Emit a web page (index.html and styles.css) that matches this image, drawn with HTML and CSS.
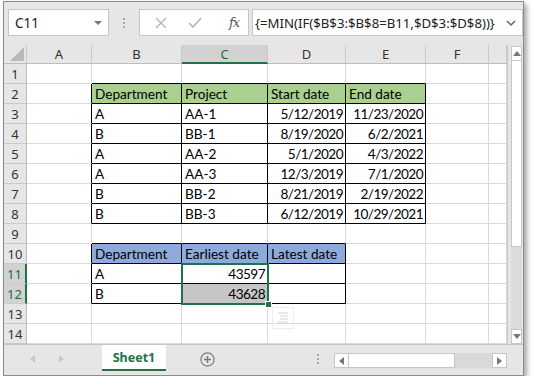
FILE: index.html
```html
<!DOCTYPE html>
<html>
<head>
<meta charset="utf-8">
<link rel="stylesheet" href="styles.css">
</head>
<body>
<div class="window">
  <div class="fbar">
    <div class="namebox"><span class="nb-text">C11</span><span class="nb-arrow"></span></div>
    <div class="dots"><i></i><i></i><i></i></div>
    <div class="btnbox">
      <svg class="ico" width="14" height="14" viewBox="0 0 14 14"><path d="M2 2 L12 12 M12 2 L2 12" stroke="#b4b4b4" stroke-width="1.4" fill="none"/></svg>
      <svg class="ico" width="16" height="14" viewBox="0 0 16 14"><path d="M2 7 L6 11 L14 2" stroke="#b4b4b4" stroke-width="1.6" fill="none"/></svg>
      <span class="fx">fx</span>
    </div>
    <div class="formula"><span class="ftext">{=MIN(IF($B$3:$B$8=B11,$D$3:$D$8))}</span>
      <svg class="chev" width="10" height="8" viewBox="0 0 10 8"><path d="M1 2 L5 6 L9 2" stroke="#666" stroke-width="1.5" fill="none"/></svg>
    </div>
  </div>
  <div class="main">
    <div class="sheet">
      <div class="ch corner"><svg width="14" height="14" viewBox="0 0 14 14"><path d="M14 0 L14 14 L0 14 Z" fill="#b9b9b9"/></svg></div>
      <div class="ch">A</div><div class="ch">B</div><div class="ch sel">C</div><div class="ch">D</div><div class="ch">E</div><div class="ch">F</div><div class="ch"></div>

      <div class="rh">1</div><div class="c"></div><div class="c bb"></div><div class="c bb"></div><div class="c bb"></div><div class="c bb"></div><div class="c"></div><div class="c"></div>

      <div class="rh">2</div><div class="c br"></div><div class="c t g">Department</div><div class="c t g">Project</div><div class="c t g">Start date</div><div class="c t g">End date</div><div class="c"></div><div class="c"></div>

      <div class="rh">3</div><div class="c br"></div><div class="c t">A</div><div class="c t">AA-1</div><div class="c t r">5/12/2019</div><div class="c t r">11/23/2020</div><div class="c"></div><div class="c"></div>
      <div class="rh">4</div><div class="c br"></div><div class="c t">B</div><div class="c t">BB-1</div><div class="c t r">8/19/2020</div><div class="c t r">6/2/2021</div><div class="c"></div><div class="c"></div>
      <div class="rh">5</div><div class="c br"></div><div class="c t">A</div><div class="c t">AA-2</div><div class="c t r">5/1/2020</div><div class="c t r">4/3/2022</div><div class="c"></div><div class="c"></div>
      <div class="rh">6</div><div class="c br"></div><div class="c t">A</div><div class="c t">AA-3</div><div class="c t r">12/3/2019</div><div class="c t r">7/1/2020</div><div class="c"></div><div class="c"></div>
      <div class="rh">7</div><div class="c br"></div><div class="c t">B</div><div class="c t">BB-2</div><div class="c t r">8/21/2019</div><div class="c t r">2/19/2022</div><div class="c"></div><div class="c"></div>
      <div class="rh">8</div><div class="c br"></div><div class="c t">B</div><div class="c t">BB-3</div><div class="c t r">6/12/2019</div><div class="c t r">10/29/2021</div><div class="c"></div><div class="c"></div>

      <div class="rh">9</div><div class="c"></div><div class="c bb"></div><div class="c bb"></div><div class="c bb"></div><div class="c"></div><div class="c"></div><div class="c"></div>

      <div class="rh">10</div><div class="c br"></div><div class="c t bl">Department</div><div class="c t bl">Earliest date</div><div class="c t bl">Latest date</div><div class="c"></div><div class="c"></div><div class="c"></div>
      <div class="rh rsel">11</div><div class="c br"></div><div class="c t">A</div><div class="c t r">43597</div><div class="c t"></div><div class="c"></div><div class="c"></div><div class="c"></div>
      <div class="rh rsel">12</div><div class="c br"></div><div class="c t">B</div><div class="c t r hl">43628</div><div class="c t"></div><div class="c"></div><div class="c"></div><div class="c"></div>

      <div class="rh">13</div><div class="c"></div><div class="c"></div><div class="c"></div><div class="c"></div><div class="c"></div><div class="c"></div><div class="c"></div>
      <div class="rh">14</div><div class="c"></div><div class="c"></div><div class="c"></div><div class="c"></div><div class="c"></div><div class="c"></div><div class="c"></div>

      <div class="selbox"><span class="handle"></span></div>
      <div class="qa">
        <svg width="22" height="22" viewBox="0 0 22 22"><rect x="0.5" y="0.5" width="21" height="21" fill="none" stroke="#eeeeee"/><path d="M6 6 H16 M8 9 H16 M8 12 H16 M6 15 H16" stroke="#e2e2e2" stroke-width="1.5"/></svg>
      </div>
    </div>
    <div class="vscroll">
      <div class="vbtn up"><svg width="8" height="5" viewBox="0 0 8 5"><path d="M0 5 L4 0 L8 5 Z" fill="#777"/></svg></div>
      <div class="vthumb"></div>
      <div class="vtrack"></div>
      <div class="vbtn down"><svg width="8" height="5" viewBox="0 0 8 5"><path d="M0 0 L4 5 L8 0 Z" fill="#777"/></svg></div>
    </div>
  </div>
  <div class="tabbar">
    <div class="navs">
      <svg width="5" height="8" viewBox="0 0 5 8"><path d="M5 0 L0 4 L5 8 Z" fill="#c8c8c8"/></svg>
      <svg width="5" height="8" viewBox="0 0 5 8"><path d="M0 0 L5 4 L0 8 Z" fill="#c8c8c8"/></svg>
    </div>
    <div class="tab">Sheet1</div>
    <div class="add"><svg width="15" height="15" viewBox="0 0 15 15"><circle cx="7.5" cy="7.5" r="6.6" fill="none" stroke="#7a7a7a" stroke-width="1.2"/><path d="M7.5 4 V11 M4 7.5 H11" stroke="#7a7a7a" stroke-width="1.5"/></svg></div>
    <div class="hdots"><i></i><i></i><i></i></div>
    <div class="hscroll">
      <div class="hbtn"><svg width="5" height="8" viewBox="0 0 5 8"><path d="M5 0 L0 4 L5 8 Z" fill="#777"/></svg></div>
      <div class="hthumb"></div>
      <div class="htrack"></div>
      <div class="hbtn"><svg width="5" height="8" viewBox="0 0 5 8"><path d="M0 0 L5 4 L0 8 Z" fill="#777"/></svg></div>
    </div>
  </div>
</div>
</body>
</html>
```

FILE: styles.css
```css
html, body { margin: 0; padding: 0; background: #ffffff; }
body { font-family: "Lato", "Liberation Sans", sans-serif; }

.window {
  margin: 1px 0 0 3px;
  width: 521px;
  height: 375px;
  box-sizing: border-box;
  border: 1px solid #8c8c8c;
  background: #e6e6e6;
  box-shadow: 3px 3px 5px rgba(0,0,0,0.35);
  display: flex;
  flex-direction: column;
  overflow: hidden;
}

/* formula bar */
.fbar {
  height: 43px;
  box-sizing: border-box;
  padding: 7px 0 0 4px;
  display: flex;
  align-items: flex-start;
  background: #e6e6e6;
}
.namebox {
  width: 101px; height: 27px; box-sizing: border-box;
  background: #fff; border: 1px solid #c6c6c6;
  display: flex; align-items: center; justify-content: space-between;
  padding: 0 6px 0 6px;
  font-family: "Noto Sans", "Open Sans", sans-serif; font-size: 13.5px; color: #222;
}
.nb-arrow { width: 0; height: 0; border-left: 4px solid transparent; border-right: 4px solid transparent; border-top: 4px solid #777; }
.dots { width: 30px; height: 27px; display: flex; flex-direction: column; align-items: center; justify-content: center; gap: 2px; }
.dots i, .hdots i { display: block; width: 2px; height: 2px; background: #a8a8a8; }
.btnbox {
  width: 110px; height: 27px; box-sizing: border-box;
  background: #fff; border: 1px solid #c6c6c6;
  display: flex; align-items: center;
  padding: 0 0 0 14px;
}
.btnbox .ico:nth-child(1) { margin-right: 19px; }
.btnbox .ico:nth-child(2) { margin-right: 26px; }
.fx { font-family: "DejaVu Serif", "Liberation Serif", serif; font-style: italic; font-size: 13px; color: #555; letter-spacing: -1px; }
.formula {
  margin-left: 3px;
  width: 271px; height: 27px; box-sizing: border-box;
  background: #fff; border: 1px solid #c6c6c6;
  display: flex; align-items: center; justify-content: space-between;
  padding: 0 6px 0 2px;
}
.ftext { font-family: "Noto Sans", "Open Sans", sans-serif; font-size: 13.2px; color: #222; white-space: nowrap; }

/* main grid */
.main { display: flex; height: 299px; }
.sheet {
  position: relative;
  display: grid;
  grid-template-columns: 23px 65px 90px 86px 78px 80px 63px 18px;
  grid-template-rows: 19px repeat(14, 20px);
  background: #fff;
  width: 503px;
}
.ch {
  background: #e6e6e6;
  border-right: 1px solid #c9c9c9;
  border-bottom: 1px solid #bdbdbd;
  box-sizing: border-box;
  display: flex; align-items: center; justify-content: center;
  font-family: "Noto Sans", "Open Sans", sans-serif; font-size: 13px; color: #333;
}
.ch.corner { justify-content: flex-end; align-items: flex-end; padding: 0 2px 2px 0; }
.ch.sel { background: #d2d2d2; border-bottom: 2px solid #217346; color: #1d6b3f; }
.rh {
  background: #e6e6e6;
  border-right: 1px solid #bdbdbd;
  border-bottom: 1px solid #c9c9c9;
  box-sizing: border-box;
  display: flex; align-items: center; justify-content: center;
  font-family: "Noto Sans", "Open Sans", sans-serif; font-size: 13px; color: #333;
}
.rh.rsel { background: #d2d2d2; border-right: 2px solid #217346; color: #1d6b3f; }
.c {
  border-right: 1px solid #d9d9d9;
  border-bottom: 1px solid #d9d9d9;
  box-sizing: border-box;
  font-size: 13.6px; color: #000;
  padding: 1px 2px 0 3px;
  display: flex; align-items: center;
  white-space: nowrap; overflow: hidden;
}
.c.t { border-right-color: #000; border-bottom-color: #000; }
.c.br { border-right-color: #000; }
.c.bb { border-bottom-color: #000; }
.c.r { justify-content: flex-end; letter-spacing: -0.55px; padding-right: 2px; }
.c.g { background: #a9d08e; }
.c.bl { background: #8eaadb; }
.c.hl { background: #c6c6c6; }

.selbox {
  position: absolute;
  left: 177px; top: 218px;
  width: 88px; height: 42px;
  box-sizing: border-box;
  border: 2px solid #217346;
  pointer-events: none;
}
.handle {
  position: absolute; right: -5px; bottom: -5px;
  width: 5px; height: 5px; background: #217346; border: 1px solid #fff;
}
.qa { position: absolute; left: 268px; top: 262px; }

/* vertical scrollbar */
.vscroll {
  width: 16px;
  background: #e6e6e6;
  border-left: 1px solid #c6c6c6;
  box-sizing: border-box;
  display: flex; flex-direction: column;
  padding: 1px 1px 0 3px;
}
.vbtn { height: 15px; background: #fff; border: 1px solid #c6c6c6; box-sizing: border-box; display: flex; align-items: center; justify-content: center; }
.vthumb { height: 186px; background: #fff; border: 1px solid #c6c6c6; border-top: 0; box-sizing: border-box; }
.vtrack { flex: 1; background: #dcdcdc; }

/* tab bar */
.tabbar {
  height: 31px; box-sizing: border-box;
  border-top: 1px solid #c6c6c6;
  background: #e6e6e6;
  display: flex; align-items: flex-start;
}
.navs { width: 98px; height: 28px; display: flex; align-items: center; gap: 24px; padding-left: 26px; box-sizing: border-box; }
.tab {
  width: 64px; height: 26px; box-sizing: border-box;
  background: #fff; border-bottom: 2px solid #217346;
  display: flex; align-items: center; justify-content: center;
  font-family: "Noto Sans", "Open Sans", sans-serif; font-weight: bold; font-size: 12.5px; color: #217346;
}
.add { margin-left: 34px; height: 28px; display: flex; align-items: center; }
.hdots { margin-left: 102px; height: 28px; display: flex; flex-direction: column; justify-content: center; gap: 2px; }
.hscroll { margin-left: 15px; margin-top: 8px; width: 173px; height: 15px; display: flex; }
.hbtn { width: 15px; height: 15px; box-sizing: border-box; background: #fff; border: 1px solid #c6c6c6; display: flex; align-items: center; justify-content: center; }
.hthumb { width: 106px; background: #fff; border: 1px solid #c6c6c6; border-left: 0; box-sizing: border-box; }
.htrack { flex: 1; background: #d9d9d9; }
```
